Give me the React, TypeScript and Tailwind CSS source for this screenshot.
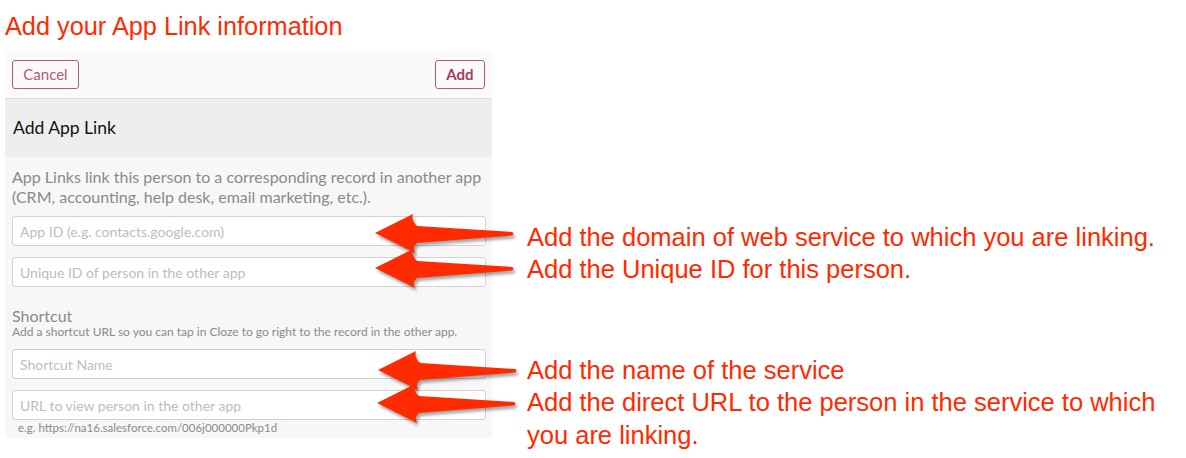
import React from "react";

const RED = "#ff2a00";

// one arrow, tip at (0,0), pointing left
function Arrow({ x, y, len = 137 }: { x: number; y: number; len?: number }) {
  const d = `M0,0 L38,-19 Q36,-12 42,-7 L${len},-1 Q${len + 3},0.5 ${len},2.5 L42,10 Q37,14 40,20 Z`;
  return (
    <g transform={`translate(${x},${y})`}>
      <path d={d} fill="#000" opacity="0.35" transform="translate(2,3)" filter="url(#blur)" />
      <path d={d} fill={RED} />
    </g>
  );
}

function Field({ placeholder, className = "" }: { placeholder: string; className?: string }) {
  return (
    <input
      placeholder={placeholder}
      className={`block h-[30px] w-[474px] rounded-[3px] border border-[#d2d2d2] bg-white px-[7px] text-[14px] text-[#333] placeholder:text-[#bdbdbd] outline-none ${className}`}
    />
  );
}

export default function App() {
  return (
    <div className="relative h-[458px] w-[1186px] overflow-hidden bg-white" style={{ fontFamily: "Lato, 'Open Sans', sans-serif" }}>
      <div className="flex">
        <div className="pl-[5px]">
          <h1
            className="pt-[11px] text-[25.3px] leading-[30px] text-[#ff2a00]"
            style={{ fontFamily: "'Liberation Sans', Arial, sans-serif" }}
          >
            Add your App Link information
          </h1>

          <div className="mt-[10px] w-[487px] bg-[#f7f7f7]">
            <div className="flex h-[48px] items-center justify-between border-b border-[#dcdcdc] bg-[#fafafa] px-[7px]">
              <button className="h-[29px] w-[67px] rounded-[3px] border border-[#b9577a] text-[15px] text-[#b6587a]">
                Cancel
              </button>
              <button className="h-[29px] w-[50px] rounded-[3px] border border-[#b9577a] text-[15px] font-bold text-[#a53a60]">
                Add
              </button>
            </div>

            <div className="flex h-[58px] items-center bg-[#eeeeee] px-[8px] text-[17.5px] text-[#111]">
              Add App Link
            </div>

            <div className="px-[7px] pb-[3px] pt-[10px]">
              <p className="text-[16px] leading-[20px] text-[#8a8a8a]">
                App Links link this person to a corresponding record in another app (CRM, accounting, help desk, email marketing, etc.).
              </p>
              <Field placeholder="App ID (e.g. contacts.google.com)" className="mt-[9px]" />
              <Field placeholder="Unique ID of person in the other app" className="mt-[11px]" />

              <div className="mt-[20px] text-[16px] leading-[18px] text-[#8a8a8a]">Shortcut</div>
              <div className="text-[12px] leading-[14px] text-[#8a8a8a]">
                Add a shortcut URL so you can tap in Cloze to go right to the record in the other app.
              </div>
              <Field placeholder="Shortcut Name" className="mt-[10px]" />
              <Field placeholder="URL to view person in the other app" className="mt-[11px]" />
              <div className="mt-[1px] pl-[6px] text-[11.5px] leading-[14px] text-[#8a8a8a]">
                e.g. https://na16.salesforce.com/006j000000Pkp1d
              </div>
            </div>
          </div>
        </div>

        <div
          className="ml-[35px] pt-[221px] text-[25.5px] leading-[32px] text-[#ff2a00]"
          style={{ fontFamily: "'Liberation Sans', Arial, sans-serif" }}
        >
          <div className="whitespace-nowrap">Add the domain of web service to which you are linking.</div>
          <div>Add the Unique ID for this person.</div>
          <div className="mt-[69px]">Add the name of the service</div>
          <div className="whitespace-nowrap">Add the direct URL to the person in the service to which</div>
          <div className="leading-[34px]">you are linking.</div>
        </div>
      </div>

      <svg className="pointer-events-none absolute inset-0" width="1186" height="458">
        <defs>
          <filter id="blur" x="-10%" y="-50%" width="120%" height="200%">
            <feGaussianBlur stdDeviation="1.5" />
          </filter>
        </defs>
        <Arrow x={375} y={233} />
        <Arrow x={375} y={268} />
        <Arrow x={378} y={370} />
        <Arrow x={377} y={403} />
      </svg>
    </div>
  );
}
